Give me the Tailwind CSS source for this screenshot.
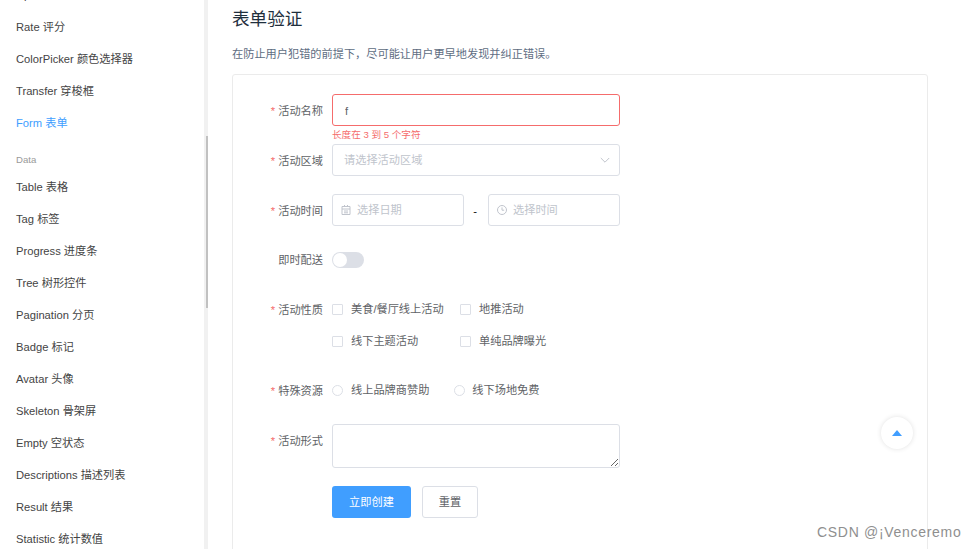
<!DOCTYPE html>
<html lang="zh-CN">

<head>
  <meta charset="UTF-8">
  <title>表单验证</title>
  <script src="https://cdn.jsdelivr.net/npm/@tailwindcss/browser@4"></script>
</head>

<body class="h-[549px] overflow-hidden bg-white font-['Liberation_Sans','Noto_Sans_CJK_SC',sans-serif] text-[11.2px] text-[#606266]">
  <div class="relative flex h-[549px] overflow-hidden">
    <!-- sidebar -->
    <nav class="w-[204px] shrink-0 overflow-hidden pl-4 text-[#444]">
      <ul class="-mt-[21px]">
        <li class="h-8 leading-8">Upload 上传</li>
        <li class="h-8 leading-8">Rate 评分</li>
        <li class="h-8 leading-8">ColorPicker 颜色选择器</li>
        <li class="h-8 leading-8">Transfer 穿梭框</li>
        <li class="h-8 leading-8 text-[#409eff]">Form 表单</li>
      </ul>
      <p class="mt-[9px] h-[23px] text-[9.6px] leading-[23px] text-[#999]">Data</p>
      <ul>
        <li class="h-8 leading-8">Table 表格</li>
        <li class="h-8 leading-8">Tag 标签</li>
        <li class="h-8 leading-8">Progress 进度条</li>
        <li class="h-8 leading-8">Tree 树形控件</li>
        <li class="h-8 leading-8">Pagination 分页</li>
        <li class="h-8 leading-8">Badge 标记</li>
        <li class="h-8 leading-8">Avatar 头像</li>
        <li class="h-8 leading-8">Skeleton 骨架屏</li>
        <li class="h-8 leading-8">Empty 空状态</li>
        <li class="h-8 leading-8">Descriptions 描述列表</li>
        <li class="h-8 leading-8">Result 结果</li>
        <li class="h-8 leading-8">Statistic 统计数值</li>
      </ul>
    </nav>
    <!-- scrollbar -->
    <div class="h-full w-1 shrink-0 bg-[#f1f1f1] pl-0.5 pt-[136px]">
      <div class="h-[172px] w-0.5 bg-[#c1c1c1]"></div>
    </div>

    <!-- content -->
    <main class="ml-6 w-[696px] shrink-0">
      <h2 class="mt-[7px] text-[17.6px] leading-6 text-[#1f2f3d]">表单验证</h2>
      <p class="mt-[15px] h-4 leading-4 text-[#5e6d82]">在防止用户犯错的前提下，尽可能让用户更早地发现并纠正错误。</p>
      <form class="mt-3 h-[600px] rounded-t-[3px] border border-[#ebebeb] pt-[19px]">
        <div class="relative mb-[18px] flex">
          <label class="h-8 w-[99px] shrink-0 pr-[9px] pt-px text-right leading-8"><span class="text-[#f56c6c]">*</span> 活动名称</label>
          <input value="f" class="h-8 w-[288px] rounded-[3px] border border-[#f56c6c] px-3 pt-px text-[11.2px] text-[#606266] outline-none">
          <div class="absolute left-[99px] top-8 text-[9.6px] leading-[17px] text-[#f56c6c]">长度在 3 到 5 个字符</div>
        </div>
        <div class="mb-[18px] flex">
          <label class="h-8 w-[99px] shrink-0 pr-[9px] pt-px text-right leading-8"><span class="text-[#f56c6c]">*</span> 活动区域</label>
          <div class="flex h-8 w-[288px] items-center justify-between rounded-[3px] border border-[#dcdfe6] pl-[11px] pr-[9px] text-[#c0c4cc]">
            <span class="pt-px">请选择活动区域</span>
            <svg class="size-[10px]" viewBox="0 0 10 10" fill="none" stroke="#c0c4cc" stroke-width="1"><path d="M.8 3l4.2 4.2L9.2 3"/></svg>
          </div>
        </div>
        <div class="mb-[18px] flex">
          <label class="h-8 w-[99px] shrink-0 pr-[9px] pt-px text-right leading-8"><span class="text-[#f56c6c]">*</span> 活动时间</label>
          <div class="flex h-8 w-[132px] items-center rounded-[3px] border border-[#dcdfe6] pl-2 text-[#c0c4cc]">
            <svg class="mr-[6px] size-[10px]" viewBox="0 0 10 10" fill="none" stroke="#c0c4cc" stroke-width="1"><path d="M1 1.5h8v8H1zM1 4h8M3.5 0v1.5M6.5 0v1.5M3 6h4M3 7.8h4"/></svg>
            <span class="pt-px">选择日期</span>
          </div>
          <div class="h-8 w-6 pr-[2px] pt-px text-center leading-8 text-[#111]">-</div>
          <div class="flex h-8 w-[132px] items-center rounded-[3px] border border-[#dcdfe6] pl-2 text-[#c0c4cc]">
            <svg class="mr-[6px] size-[10px]" viewBox="0 0 10 10" fill="none" stroke="#c0c4cc" stroke-width="1"><circle cx="5" cy="5" r="4.5"/><path d="M5 2.4V5.2H7.2"/></svg>
            <span class="pt-px">选择时间</span>
          </div>
        </div>
        <div class="mb-[17px] flex">
          <label class="h-8 w-[99px] shrink-0 pr-[9px] text-right leading-8">即时配送</label>
          <div class="mt-2 flex h-4 w-8 items-center rounded-full bg-[#dcdfe6] pl-px">
            <span class="size-[14px] rounded-full bg-white"></span>
          </div>
        </div>
        <div class="mb-[17px] flex">
          <label class="h-8 w-[99px] shrink-0 pr-[9px] pt-px text-right leading-8"><span class="text-[#f56c6c]">*</span> 活动性质</label>
          <div class="grid grid-cols-[128px_auto] leading-8">
            <div class="flex items-center"><span class="mr-2 size-[11px] rounded-[1px] border border-[#dcdfe6]"></span>美食/餐厅线上活动</div>
            <div class="flex items-center"><span class="mr-2 size-[11px] rounded-[1px] border border-[#dcdfe6]"></span>地推活动</div>
            <div class="flex items-center"><span class="mr-2 size-[11px] rounded-[1px] border border-[#dcdfe6]"></span>线下主题活动</div>
            <div class="flex items-center"><span class="mr-2 size-[11px] rounded-[1px] border border-[#dcdfe6]"></span>单纯品牌曝光</div>
          </div>
        </div>
        <div class="mb-[18px] flex">
          <label class="h-8 w-[99px] shrink-0 pr-[9px] pt-px text-right leading-8"><span class="text-[#f56c6c]">*</span> 特殊资源</label>
          <div class="flex items-center leading-8">
            <span class="mr-2 size-[11px] rounded-full border border-[#dcdfe6]"></span>线上品牌商赞助
            <span class="ml-[25px] mr-[7px] size-[11px] rounded-full border border-[#dcdfe6]"></span>线下场地免费
          </div>
        </div>
        <div class="mb-[18px] flex">
          <label class="h-8 w-[99px] shrink-0 pr-[9px] pt-px text-right leading-8"><span class="text-[#f56c6c]">*</span> 活动形式</label>
          <textarea class="block h-11 w-[288px] rounded-[3px] border border-[#dcdfe6] outline-none"></textarea>
        </div>
        <div class="flex pl-[99px]">
          <button type="button" class="h-8 w-[79px] rounded-[3px] bg-[#409eff] text-white">立即创建</button>
          <button type="button" class="ml-[11px] h-8 w-[56px] rounded-[3px] border border-[#dcdfe6] text-[#606266]">重置</button>
        </div>
      </form>
    </main>

    <!-- back to top -->
    <div class="absolute left-[881px] top-[417px] flex size-8 items-center justify-center rounded-full bg-white shadow-[0_0_5px_rgba(0,0,0,0.12)]">
      <span class="size-0 border-x-[5.5px] border-b-[6px] border-x-transparent border-b-[#409eff]"></span>
    </div>
    <!-- watermark -->
    <div class="absolute left-[817px] top-[523px] text-[14px] leading-[18px] tracking-[0.7px] text-[#8f8f8f]">CSDN @¡Venceremo</div>
  </div>
</body>

</html>
